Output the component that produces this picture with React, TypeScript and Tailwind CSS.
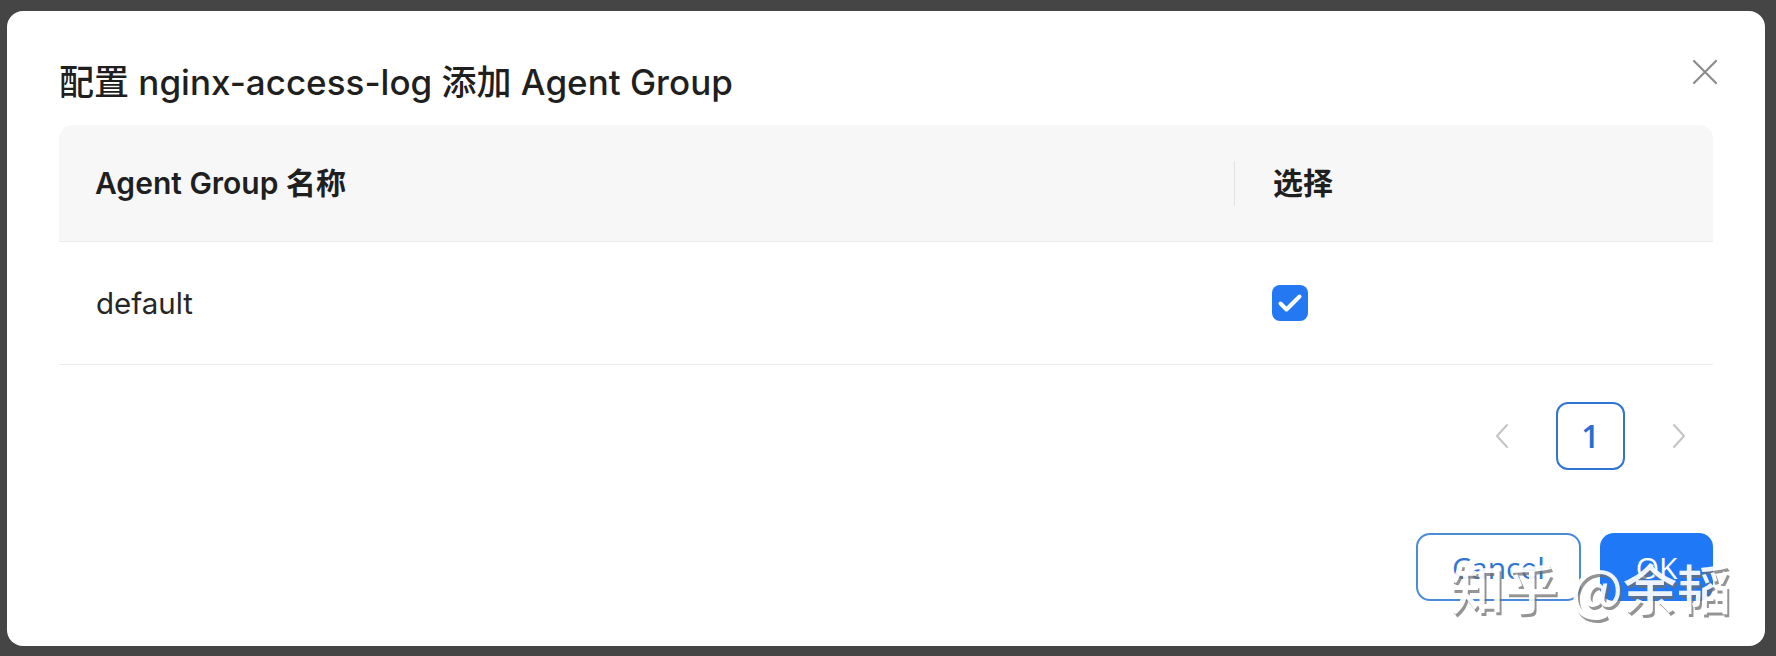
import React from "react";

const font = { fontFamily: 'Inter, "Noto Sans CJK SC", sans-serif' };

export default function App() {
  return (
    <div
      className="h-[656px] w-full bg-[#454545] pt-[11px] pl-[7px] pr-[11px] pb-[10px]"
      style={font}
    >
      <div className="relative flex h-full flex-col rounded-[16px] bg-white px-[52px] pt-[51px] pb-[45px]">
        <button className="absolute right-[47px] top-[48px] text-[#8c8c8c]">
          <svg width="26" height="26" viewBox="0 0 26 26" fill="none">
            <path d="M2 2 L24 24 M24 2 L2 24" stroke="currentColor" strokeWidth="2.2" strokeLinecap="round" />
          </svg>
        </button>

        <h1 className="text-[35px] font-medium leading-[40px] text-[#1f1f1f]">
          配置 nginx-access-log 添加 Agent Group
        </h1>

        <div className="mt-[23px]">
          <div className="flex h-[117px] items-center rounded-t-[14px] border-b border-[#ebebeb] bg-[#f7f7f7]">
            <div className="flex h-full w-[1176px] items-center justify-between pl-[36px]">
              <span className="text-[30px] font-semibold text-[#1f1f1f]">Agent Group 名称</span>
              <span className="h-[45px] w-px bg-[#e3e3e3]" />
            </div>
            <div className="pl-[38px] text-[30px] font-semibold text-[#1f1f1f]">选择</div>
          </div>
          <div className="flex h-[123px] items-center border-b border-[#ebebeb]">
            <div className="w-[1176px] pl-[37px] text-[29.5px] text-[#262626]">default</div>
            <div className="pl-[37px]">
              <div className="flex h-[36px] w-[36px] items-center justify-center rounded-[8px] bg-[#2479f3]">
                <svg width="36" height="36" viewBox="0 0 36 36" fill="none">
                  <path d="M8.5 18.5 L14.5 24.5 L27.5 11.5" stroke="white" strokeWidth="4" strokeLinecap="round" strokeLinejoin="round" />
                </svg>
              </div>
            </div>
          </div>
        </div>

        <div className="mt-[37px] flex items-center justify-end gap-[20px]">
          <button className="flex h-[68px] w-[68px] items-center justify-center text-[#c4c4c4]">
            <svg width="16" height="26" viewBox="0 0 16 26" fill="none">
              <path d="M13 2 L3 13 L13 24" stroke="currentColor" strokeWidth="2" strokeLinecap="round" strokeLinejoin="round" />
            </svg>
          </button>
          <button
            className="flex h-[68px] w-[69px] items-center justify-center rounded-[12px] border-2 border-[#2f76d4] text-[32px] font-semibold text-[#2a6fd0]"
            style={{ fontFamily: '"Open Sans", sans-serif' }}
          >
            1
          </button>
          <button className="flex h-[68px] w-[68px] items-center justify-center text-[#c4c4c4]">
            <svg width="16" height="26" viewBox="0 0 16 26" fill="none">
              <path d="M3 2 L13 13 L3 24" stroke="currentColor" strokeWidth="2" strokeLinecap="round" strokeLinejoin="round" />
            </svg>
          </button>
        </div>

        <div className="mt-auto flex justify-end gap-[19px]">
          <button
            className="h-[68px] w-[165px] rounded-[14px] border-2 border-[#4a8cda] bg-white text-[30px] text-[#2f76d4]"
            style={{ fontFamily: '"Open Sans", sans-serif' }}
          >
            Cancel
          </button>
          <button
            className="h-[68px] w-[113px] rounded-[14px] bg-[#1f78f5] text-[30px] text-white"
            style={{ fontFamily: '"Open Sans", sans-serif' }}
          >
            OK
          </button>
        </div>

        <div
          className="pointer-events-none absolute right-[34px] bottom-[32px] text-[54px] font-medium leading-none text-white"
          style={{
            fontFamily: '"Noto Sans CJK SC", sans-serif',
            textShadow: "2px 3px 0 rgba(110,110,110,0.8)",
            opacity: 0.92,
          }}
        >
          知乎 @余韬
        </div>
      </div>
    </div>
  );
}
